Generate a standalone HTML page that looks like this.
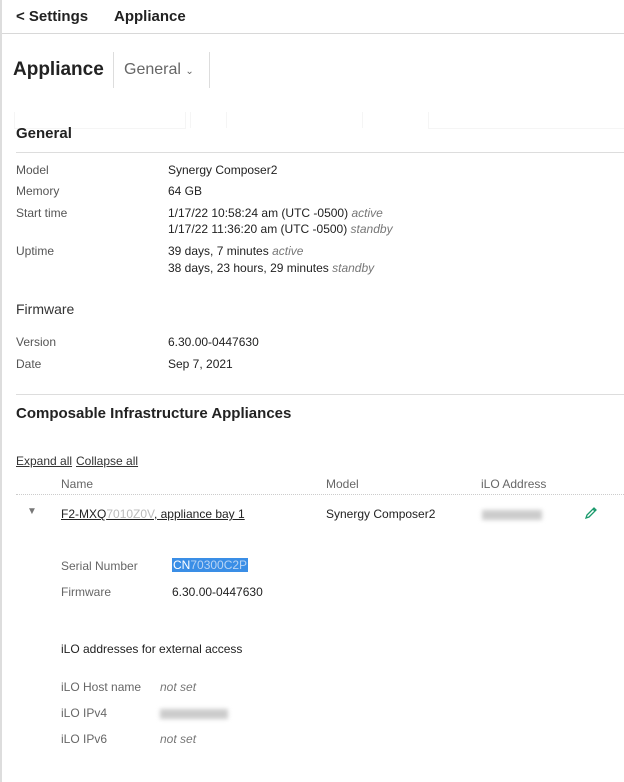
<!DOCTYPE html><html><head><style>
body{margin:0;width:624px;height:782px;background:#fff;font-family:"Liberation Sans",sans-serif;position:relative;overflow:hidden;color:#222}
div,span{position:absolute;white-space:nowrap}
.l{font-size:12px;color:#555}.v{font-size:12px;color:#222}
i{color:#777}
.hl{height:1px;background:#ddd}
.blur{background:#ccc;filter:blur(2px);height:10px}
</style></head><body>
<div style="left:0;top:0;width:2px;height:782px;background:#ddd"></div>
<div style="left:16px;top:8px;font-size:15px;font-weight:bold">&lt; Settings</div>
<div style="left:114px;top:8px;font-size:15px;font-weight:bold">Appliance</div>
<div class="hl" style="left:2px;top:33px;width:622px;background:#d8d8d8"></div>
<div style="left:13px;top:59px;font-size:19px;font-weight:bold">Appliance</div>
<div style="left:113px;top:52px;width:1px;height:36px;background:#ddd"></div>
<div style="left:124px;top:61px;font-size:16px;color:#666">General <span style="position:static;font-size:10px">⌄</span></div>
<div style="left:209px;top:52px;width:1px;height:36px;background:#ddd"></div>
<div style="left:14px;top:112px;width:170px;height:16px;border:1px solid #f5f5f5;border-top:none"></div>
<div style="left:190px;top:112px;width:1px;height:16px;background:#f5f5f5"></div>
<div style="left:226px;top:112px;width:1px;height:16px;background:#f5f5f5"></div>
<div style="left:362px;top:112px;width:1px;height:16px;background:#f5f5f5"></div>
<div style="left:428px;top:112px;width:196px;height:16px;border-left:1px solid #f5f5f5;border-bottom:1px solid #f5f5f5"></div>
<div style="left:16px;top:125px;font-size:15px;font-weight:bold">General</div>
<div class="hl" style="left:16px;top:152px;width:608px"></div>
<div class="l" style="left:16px;top:163px">Model</div><div class="v" style="left:168px;top:163px">Synergy Composer2</div>
<div class="l" style="left:16px;top:184px">Memory</div><div class="v" style="left:168px;top:184px">64 GB</div>
<div class="l" style="left:16px;top:206px">Start time</div><div class="v" style="left:168px;top:206px">1/17/22 10:58:24 am (UTC -0500) <i>active</i></div>
<div class="v" style="left:168px;top:222px">1/17/22 11:36:20 am (UTC -0500) <i>standby</i></div>
<div class="l" style="left:16px;top:244px">Uptime</div><div class="v" style="left:168px;top:244px">39 days, 7 minutes <i>active</i></div>
<div class="v" style="left:168px;top:261px">38 days, 23 hours, 29 minutes <i>standby</i></div>
<div style="left:16px;top:301px;font-size:14px;color:#333">Firmware</div>
<div class="l" style="left:16px;top:335px">Version</div><div class="v" style="left:168px;top:335px">6.30.00-0447630</div>
<div class="l" style="left:16px;top:357px">Date</div><div class="v" style="left:168px;top:357px">Sep 7, 2021</div>
<div class="hl" style="left:16px;top:394px;width:608px"></div>
<div style="left:16px;top:405px;font-size:15px;font-weight:bold">Composable Infrastructure Appliances</div>
<div class="v" style="left:16px;top:454px;text-decoration:underline;color:#333">Expand all</div>
<div class="v" style="left:76px;top:454px;text-decoration:underline;color:#333">Collapse all</div>
<div class="l" style="left:61px;top:477px;color:#666">Name</div>
<div class="l" style="left:326px;top:477px;color:#666">Model</div>
<div class="l" style="left:481px;top:477px;color:#666">iLO Address</div>
<div style="left:16px;top:494px;width:608px;border-top:1px dotted #ccc"></div>
<div style="left:27px;top:506px;font-size:10px;color:#777">▼</div>
<div class="v" style="left:61px;top:507px;text-decoration:underline">F2-MXQ<span style="position:static;color:#bbb">7010Z0V</span>, appliance bay 1</div>
<div class="v" style="left:326px;top:507px">Synergy Composer2</div>
<div class="blur" style="left:482px;top:510px;width:60px"></div>
<svg style="position:absolute;left:584px;top:506px" width="14" height="14" viewBox="0 0 14 14"><path d="M2 12 L3 9 L10 2 L12 4 L5 11 Z M9 3 L11 5" fill="none" stroke="#1a9a6c" stroke-width="1.3"/></svg>
<div class="l" style="left:61px;top:559px;color:#666">Serial Number</div>
<div class="v" style="left:172px;top:558px;background:#3a8ee6;color:#fff;padding:0 1px">CN<span style="position:static;color:#b8d4f4">70300C2P</span></div>
<div class="l" style="left:61px;top:585px;color:#666">Firmware</div><div class="v" style="left:172px;top:585px">6.30.00-0447630</div>
<div class="v" style="left:61px;top:642px">iLO addresses for external access</div>
<div class="l" style="left:61px;top:680px;color:#666">iLO Host name</div><div class="v" style="left:160px;top:680px"><i>not set</i></div>
<div class="l" style="left:61px;top:706px;color:#666">iLO IPv4</div><div class="blur" style="left:160px;top:709px;width:68px"></div>
<div class="l" style="left:61px;top:732px;color:#666">iLO IPv6</div><div class="v" style="left:160px;top:732px"><i>not set</i></div>
</body></html>
